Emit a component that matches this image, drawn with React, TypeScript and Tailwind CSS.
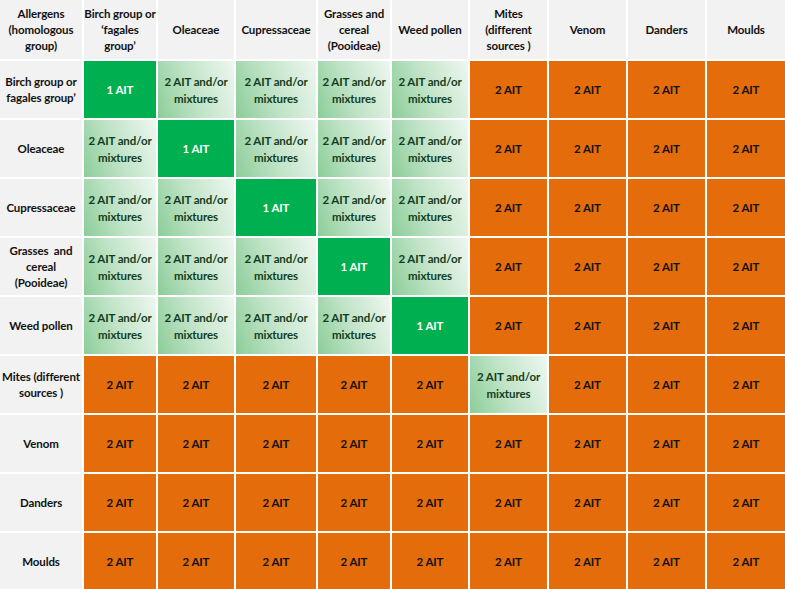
import React from 'react';

type Kind = 'one' | 'mix' | 'two';

// each label is split into its printed lines
const groups = [
  ['Birch group or', 'fagales group’'],
  ['Oleaceae'],
  ['Cupressaceae'],
  ['Grasses  and', 'cereal', '(Pooideae)'],
  ['Weed pollen'],
  ['Mites (different', 'sources )'],
  ['Venom'],
  ['Danders'],
  ['Moulds'],
];

const headers = [
  ['Allergens', '(homologous', 'group)'],
  ['Birch group or', '‘fagales', 'group’'],
  ['Oleaceae'],
  ['Cupressaceae'],
  ['Grasses and', 'cereal', '(Pooideae)'],
  ['Weed pollen'],
  ['Mites', '(different', 'sources )'],
  ['Venom'],
  ['Danders'],
  ['Moulds'],
];

// pollen groups share the first five rows/cols
const kindFor = (r: number, c: number): Kind => {
  if (r === c && r < 5) return 'one';
  if (r < 5 && c < 5) return 'mix';
  if (r === 5 && c === 5) return 'mix';
  return 'two';
};

const Label = ({ lines }: { lines: string[] }) => (
  <div className="flex flex-col items-center justify-center whitespace-pre bg-[#f2f2f2] text-center leading-[16px] text-[#111]">
    {lines.map((l) => (
      <span key={l}>{l}</span>
    ))}
  </div>
);

const Cell = ({ kind }: { kind: Kind }) => {
  if (kind === 'one') {
    return (
      <div className="flex items-center justify-center bg-[#00b050] text-white">1 AIT</div>
    );
  }
  if (kind === 'mix') {
    return (
      <div className="flex flex-col items-center justify-center whitespace-nowrap bg-[linear-gradient(70deg,#8ccd99_0%,#bfe3c6_45%,#eef7f0_100%)] text-center leading-[17px] text-[#123d1d]">
        <span>2 AIT and/or</span>
        <span>mixtures</span>
      </div>
    );
  }
  return (
    <div className="flex items-center justify-center bg-[#e46c0a] text-[#111]">2 AIT</div>
  );
};

export default function App() {
  return (
    <div
      className="grid h-[589px] w-[785px] grid-cols-[82px_72px_76px_80px_72px_76px_77px_77px_77px_1fr] grid-rows-[59px_repeat(9,57px)] gap-[2px] overflow-hidden bg-white text-[11.5px] font-bold tracking-[-0.1px]"
      style={{ fontFamily: 'Lato, "Open Sans", sans-serif' }}
    >
      {headers.map((h, i) => (
        <Label key={i} lines={h} />
      ))}
      {groups.map((g, r) => (
        <React.Fragment key={r}>
          <Label lines={g} />
          {groups.map((_, c) => (
            <Cell key={c} kind={kindFor(r, c)} />
          ))}
        </React.Fragment>
      ))}
    </div>
  );
}
